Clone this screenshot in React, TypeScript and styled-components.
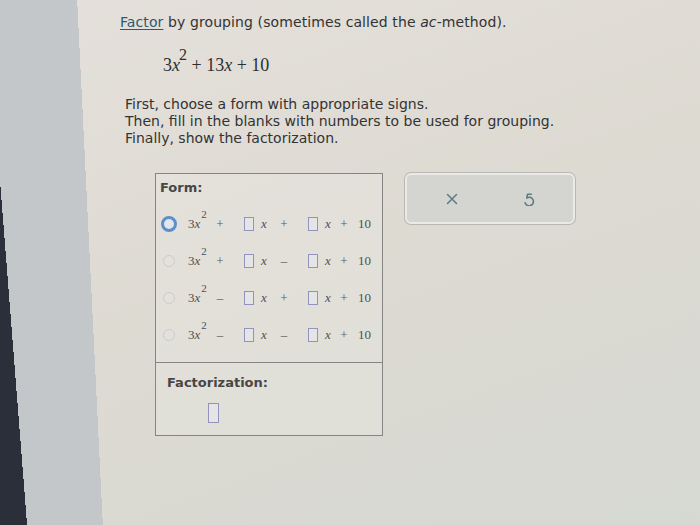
import React from "react";
import styled, { createGlobalStyle } from "styled-components";

const GlobalStyle = createGlobalStyle`
  html, body {
    margin: 0;
    padding: 0;
    background: #dedad3;
  }
  * {
    box-sizing: border-box;
  }
`;

// rows of the "Form" choice
const forms = [
  { first: "+", second: "+", selected: true },
  { first: "+", second: "–", selected: false },
  { first: "–", second: "+", selected: false },
  { first: "–", second: "–", selected: false },
];

const Page = styled.div`
  display: flex;
  width: 700px;
  height: 525px;
  overflow: hidden;
  background: linear-gradient(160deg, #e5e0db 0%, #dddad2 50%, #d6d8d3 100%);
  font-family: "DejaVu Sans", Verdana, sans-serif;
  color: #333333;
`;

// the monitor edge seen at the left of the photo
const Bezel = styled.div`
  flex: 0 0 110px;
  background:
    linear-gradient(85.5deg, #2b2f3a 0 27px, transparent 27px),
    linear-gradient(87.2deg, #c3c7ca 0 102.7px, transparent 102.7px);
`;

const Main = styled.main`
  flex: 1;
  display: flex;
  flex-direction: column;
  align-items: flex-start;
  padding: 13px 0 0 10px;
`;

const Title = styled.h1`
  margin: 0;
  font-size: 14px;
  font-weight: normal;
  line-height: 18px;
  letter-spacing: 0.1px;
  white-space: nowrap;
`;

const TermLink = styled.a`
  color: #2c5a70;
  text-decoration: underline;
  text-underline-offset: 2px;
`;

const Equation = styled.div`
  margin: 23px 0 0 43px;
  font-family: "Liberation Serif", "Times New Roman", serif;
  font-size: 18px;
  line-height: 22px;
  color: #2e2e2e;
  white-space: nowrap;
`;

const Var = styled.i`
  font-style: italic;
`;

const Sup = styled.span<{ $rise: number; $size: number; $pull: number }>`
  position: relative;
  top: -${(p) => p.$rise}px;
  margin-left: ${(p) => p.$pull}px;
  font-size: ${(p) => p.$size}px;
`;

const Instructions = styled.p`
  margin: 19px 0 0 5px;
  font-size: 14px;
  line-height: 17px;
  white-space: nowrap;
`;

const Workspace = styled.div`
  display: flex;
  align-items: flex-start;
  gap: 22px;
  margin: 26px 0 0 35px;
`;

const FormPanel = styled.section`
  width: 228px;
  border: 1px solid #858583;
  background: rgba(236, 234, 229, 0.35);
`;

const FormSection = styled.div`
  padding: 6px 0 9px 4px;
  border-bottom: 1px solid #858583;
`;

const Label = styled.div`
  font-size: 13px;
  font-weight: bold;
  line-height: 16px;
  color: #474747;
`;

const OptionList = styled.div`
  display: flex;
  flex-direction: column;
  margin-top: 9px;
  padding-left: 1px;
`;

const OptionRow = styled.div`
  display: flex;
  align-items: center;
  height: 37px;
`;

const Radio = styled.span<{ $on: boolean }>`
  flex: 0 0 auto;
  width: ${(p) => (p.$on ? 16 : 12)}px;
  height: ${(p) => (p.$on ? 16 : 12)}px;
  margin: 0 ${(p) => (p.$on ? 11 : 13)}px 0 ${(p) => (p.$on ? 0 : 2)}px;
  border-radius: 50%;
  border: ${(p) => (p.$on ? "3.5px solid #5e8ecb" : "1.5px solid #cbcbc8")};
  background: ${(p) => (p.$on ? "#e3e6ea" : "#e2e1dd")};
`;

const Expression = styled.div`
  display: grid;
  grid-template-columns: 24px 16px 48px 16px 44px 16px auto;
  align-items: center;
  font-family: "Liberation Serif", "Times New Roman", serif;
  font-size: 13px;
  line-height: 16px;
  color: #505050;
`;

const Lead = styled.span`
  white-space: nowrap;
`;

const Sign = styled.span`
  text-align: center;
  color: #5a5a5a;
`;

const Coef = styled.span`
  display: flex;
  align-items: center;
  gap: 7px;
  padding-left: 16px;
`;

const Blank = styled.span<{ $w: number; $h: number }>`
  display: inline-block;
  width: ${(p) => p.$w}px;
  height: ${(p) => p.$h}px;
  border: 1.5px solid #9393bf;
  background: #e6e5e6;
`;

const Const = styled.span`
  padding-left: 6px;
`;

const FactorSection = styled.div`
  display: flex;
  flex-direction: column;
  align-items: flex-start;
  gap: 12px;
  padding: 12px 0 12px 11px;
`;

const AnswerBlank = styled(Blank)`
  margin-left: 41px;
`;

const ActionBar = styled.div`
  display: flex;
  justify-content: center;
  align-items: center;
  width: 170px;
  height: 51px;
  border: 2px solid #eceae6;
  border-radius: 6px;
  box-shadow: 0 0 0 1px #b8b8b3;
  background: #d4d4d0;
`;

const IconButton = styled.button`
  display: flex;
  justify-content: center;
  align-items: center;
  width: 76px;
  height: 30px;
  padding: 0;
  border: none;
  background: none;
  color: #5b7c85;
  cursor: pointer;
`;

const CloseIcon = () => (
  <svg width="12" height="12" viewBox="0 0 12 12" fill="none">
    <path d="M1.5 1.5 L10.5 10.5 M10.5 1.5 L1.5 10.5" stroke="currentColor" strokeWidth="1.5" strokeLinecap="round" />
  </svg>
);

const UndoIcon = () => (
  <svg width="13" height="14" viewBox="0 0 14 15" fill="none">
    <path
      d="M5.2 6.3 A4.6 4.6 0 1 1 3.3 11.6"
      stroke="currentColor"
      strokeWidth="1.7"
      strokeLinecap="round"
    />
    <path d="M5.2 6.4 L5.9 2.4 L10 2.4" stroke="currentColor" strokeWidth="1.7" strokeLinecap="round" strokeLinejoin="round" />
  </svg>
);

const App: React.FC = () => {
  return (
    <>
      <GlobalStyle />
      <Page>
        <Bezel />
        <Main>
          <Title>
            <TermLink>Factor</TermLink> by grouping (sometimes called the <Var>ac</Var>-method).
          </Title>

          <Equation>
            3<Var>x</Var>
            <Sup $rise={11} $size={16} $pull={-1}>2</Sup> + 13<Var>x</Var> + 10
          </Equation>

          <Instructions>
            First, choose a form with appropriate signs.
            <br />
            Then, fill in the blanks with numbers to be used for grouping.
            <br />
            Finally, show the factorization.
          </Instructions>

          <Workspace>
            <FormPanel>
              <FormSection>
                <Label>Form:</Label>
                <OptionList>
                  {forms.map((form, index) => (
                    <OptionRow key={index}>
                      <Radio $on={form.selected} />
                      <Expression>
                        <Lead>
                          3<Var>x</Var>
                          <Sup $rise={10} $size={11} $pull={1}>2</Sup>
                        </Lead>
                        <Sign>{form.first}</Sign>
                        <Coef>
                          <Blank $w={10} $h={14} />
                          <Var>x</Var>
                        </Coef>
                        <Sign>{form.second}</Sign>
                        <Coef>
                          <Blank $w={10} $h={14} />
                          <Var>x</Var>
                        </Coef>
                        <Sign>+</Sign>
                        <Const>10</Const>
                      </Expression>
                    </OptionRow>
                  ))}
                </OptionList>
              </FormSection>

              <FactorSection>
                <Label>Factorization:</Label>
                <AnswerBlank $w={11} $h={20} />
              </FactorSection>
            </FormPanel>

            <ActionBar>
              <IconButton aria-label="Clear">
                <CloseIcon />
              </IconButton>
              <IconButton aria-label="Undo">
                <UndoIcon />
              </IconButton>
            </ActionBar>
          </Workspace>
        </Main>
      </Page>
    </>
  );
};

export default App;
